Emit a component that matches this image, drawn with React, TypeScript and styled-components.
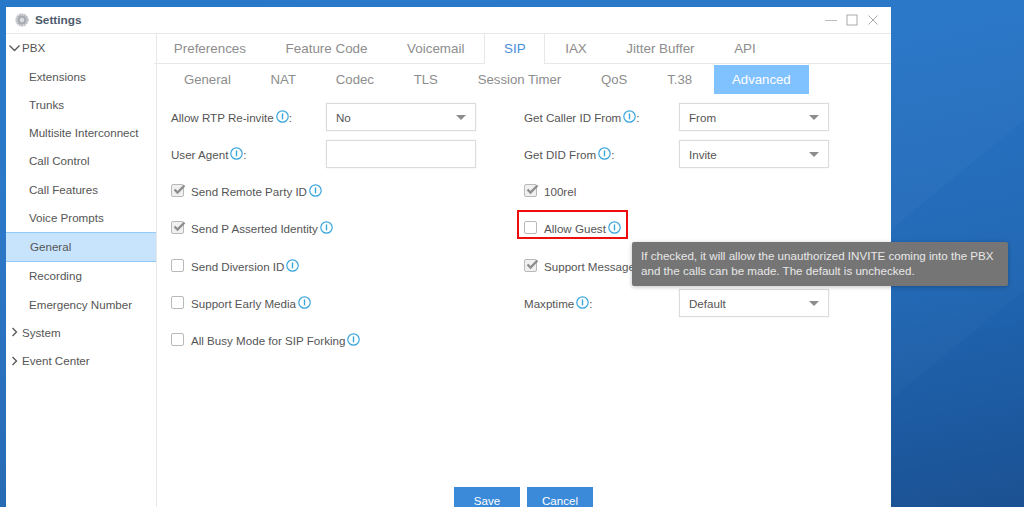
import React from 'react'
import styled, { createGlobalStyle } from 'styled-components'

const GlobalStyle = createGlobalStyle`
  html, body {
    margin: 0;
    height: 100%;
    overflow: hidden;
  }
  body {
    font-family: "Liberation Sans", Arial, sans-serif;
  }
`

const Desktop = styled.div`
  width: 1024px;
  height: 507px;
  overflow: hidden;
  padding: 7px 0 0 6px;
  box-sizing: border-box;
  background:
    linear-gradient(140.6deg, rgba(255, 255, 255, 0.025) 0 71.3%, transparent 71.3%),
    linear-gradient(140.6deg, rgba(255, 255, 255, 0.02) 0 83.9%, transparent 83.9%),
    linear-gradient(168deg, #1e72c7 0%, #2372c6 30%, #1f65b2 68%, #1b5192 100%);
`

const Window = styled.div`
  width: 885px;
  height: 520px;
  background: #fff;
  display: flex;
  flex-direction: column;
`

const TitleBar = styled.div`
  height: 27px;
  flex: none;
  display: flex;
  align-items: center;
  padding: 0 12px 0 9px;
  border-bottom: 1px solid #e8e8e8;
  box-sizing: border-box;
`

const Title = styled.span`
  margin-left: 6px;
  font-size: 11.8px;
  font-weight: bold;
  color: #4d5b6c;
  flex: 1;
`

const WindowControls = styled.div`
  display: flex;
  align-items: center;
  gap: 9px;
`

const Body = styled.div`
  flex: 1;
  display: flex;
  min-height: 0;
`

const Sidebar = styled.nav`
  width: 150px;
  flex: none;
  border-right: 1px solid #e8e8e8;
`

const TreeList = styled.div`
  margin-top: -0.4px;
`

const TreeRow = styled.div<{ $child?: boolean; $active?: boolean }>`
  height: ${p => (p.$active ? 30 : 28.3)}px;
  box-sizing: border-box;
  display: flex;
  align-items: center;
  font-size: 11.6px;
  color: #555;
  padding-left: ${p => (p.$child ? (p.$active ? 24 : 23) : 2)}px;
  background: ${p => (p.$active ? '#c8e4fd' : 'transparent')};
  border-style: solid;
  border-color: #91c9f7;
  border-width: ${p => (p.$active ? '1px 0' : '0')};
`

const TreeLabel = styled.span`
  margin-left: 1px;
`

const Main = styled.div`
  flex: 1;
  min-width: 0;
  position: relative;
`

const TabStrip = styled.div`
  height: 30px;
  box-sizing: border-box;
  display: flex;
  margin-left: -3px;
  border-bottom: 1px solid #e8e8e8;
`

const Tab = styled.div<{ $active?: boolean }>`
  height: 30px;
  padding: 0 18.8px 2px;
  box-sizing: border-box;
  display: flex;
  align-items: center;
  font-size: 13.4px;
  color: ${p => (p.$active ? '#4a90d9' : '#8d8d8d')};
  background: ${p => (p.$active ? '#fff' : 'transparent')};
  border: 1px solid ${p => (p.$active ? '#e8e8e8' : 'transparent')};
  border-top: 0;
  border-bottom: 0;
`

const SubTabStrip = styled.div`
  height: 29px;
  margin-top: 1px;
  display: flex;
  padding-left: 7px;
`

const SubTab = styled.div<{ $active?: boolean }>`
  padding: 0 ${p => (p.$active ? 18 : 19.9)}px;
  margin-left: ${p => (p.$active ? 2 : 0)}px;
  display: flex;
  align-items: center;
  font-size: 13.2px;
  color: ${p => (p.$active ? '#fff' : '#8d8d8d')};
  background: ${p => (p.$active ? '#80c1ff' : 'transparent')};
`

const FormGrid = styled.div`
  height: 393px;
  box-sizing: border-box;
  display: grid;
  grid-template-columns: 353px 353px;
  grid-auto-rows: 37.25px;
  padding: 4.5px 0 0 14px;
`

const Field = styled.div`
  display: flex;
  align-items: center;
  font-size: 11.6px;
  color: #555;
`

const FieldLabel = styled.div`
  width: 155px;
  flex: none;
  display: flex;
  align-items: center;
`

const Select = styled.div`
  width: 150px;
  height: 28px;
  box-sizing: border-box;
  border: 1px solid #dcdcdc;
  box-shadow: 0 0 1px #ddd;
  display: flex;
  align-items: center;
  justify-content: space-between;
  padding: 0 9px;
  font-size: 11.6px;
  color: #555;
`

const Caret = styled.span`
  width: 0;
  height: 0;
  border-left: 5px solid transparent;
  border-right: 5px solid transparent;
  border-top: 5px solid #8c8c8c;
`

const Box = styled.span<{ $checked?: boolean }>`
  width: 13px;
  height: 13px;
  box-sizing: border-box;
  flex: none;
  border: 1px solid #b9b9b9;
  border-radius: 2px;
  margin-right: 7px;
  position: relative;
  top: -1px;
  background: ${p => (p.$checked ? '#f0f0f0' : '#fff')};
  display: inline-flex;
`

const Check = styled.svg`
  position: absolute;
  left: 0;
  top: -2px;
`

const InfoGlyph = styled.svg`
  flex: none;
  margin: -2px 0 0 2px;
`

const GuestFrame = styled.div`
  display: flex;
  align-items: center;
  outline: 2px solid #ee0e0e;
  box-sizing: border-box;
  height: 25px;
  margin: 0 0 8px -5px;
  padding: 8px 5px 0 5px;
`

const Tooltip = styled.div`
  position: absolute;
  left: 475px;
  top: 208px;
  width: 376px;
  height: 44px;
  box-sizing: border-box;
  padding: 6px 9px;
  background: #757575;
  border-radius: 2px;
  box-shadow: 0 1px 4px rgba(0, 0, 0, 0.25);
  color: #e8e8e8;
  font-size: 11.6px;
  line-height: 15px;
  white-space: nowrap;
`

const Actions = styled.div`
  margin-left: 297px;
  display: flex;
  gap: 7px;
`

const Button = styled.div`
  width: 66px;
  height: 26px;
  background: #3a8ad9;
  color: #fff;
  font-size: 11.6px;
  display: flex;
  align-items: center;
  justify-content: center;
`

const InfoIcon = () => (
  <InfoGlyph width="13" height="13" viewBox="0 0 13 13">
    <circle cx="6.5" cy="6.5" r="5.7" fill="none" stroke="#3aa6dc" strokeWidth="1.2" />
    <rect x="5.8" y="3.4" width="1.4" height="6" fill="#3aa6dc" />
  </InfoGlyph>
)

const Chevron = ({ open }: { open?: boolean }) => (
  <svg width="13" height="10" viewBox="0 0 13 10" style={{ flex: 'none' }}>
    <path
      d={open ? 'M1.5 2.5 L6.5 7.5 L11.5 2.5' : 'M4.5 1 L8.5 5 L4.5 9'}
      fill="none"
      stroke="#555"
      strokeWidth="1.3"
    />
  </svg>
)

const GearLogo = () => (
  <svg width="14" height="14" viewBox="0 0 14 14">
    <circle cx="7" cy="7" r="5.6" fill="none" stroke="#bcbfc3" strokeWidth="2" strokeDasharray="2 .5" />
    <circle cx="7" cy="7" r="4.8" fill="#a9adb3" />
    <circle cx="7" cy="7" r="2.2" fill="#dcdee0" />
  </svg>
)

const Checkbox = ({ checked }: { checked?: boolean }) => (
  <Box $checked={checked}>
    {checked && (
      <Check width="15" height="14" viewBox="0 0 15 14">
        <path d="M2.5 6.5 L5.5 9.5 L12.5 2.5" fill="none" stroke="#8e8e8e" strokeWidth="2.4" />
      </Check>
    )}
  </Box>
)

const treeBefore = ['Extensions', 'Trunks', 'Multisite Interconnect', 'Call Control', 'Call Features', 'Voice Prompts']
const treeAfter = ['Recording', 'Emergency Number']
const tabs = ['Preferences', 'Feature Code', 'Voicemail', 'SIP', 'IAX', 'Jitter Buffer', 'API']
const subTabs = ['General', 'NAT', 'Codec', 'TLS', 'Session Timer', 'QoS', 'T.38', 'Advanced']

const App: React.FC = () => (
  <Desktop>
    <GlobalStyle />
    <Window>
      <TitleBar>
        <GearLogo />
        <Title>Settings</Title>
        <WindowControls>
          <svg width="12" height="12" viewBox="0 0 12 12">
            <path d="M0 6.5H12" stroke="#bbb" />
          </svg>
          <svg width="12" height="12" viewBox="0 0 12 12">
            <rect x="1" y="1" width="10" height="10" fill="none" stroke="#aaa" />
          </svg>
          <svg width="12" height="12" viewBox="0 0 12 12">
            <path d="M1.5 1.5 10.5 10.5M10.5 1.5 1.5 10.5" stroke="#aaa" />
          </svg>
        </WindowControls>
      </TitleBar>
      <Body>
        <Sidebar>
          <TreeList>
            <TreeRow>
              <Chevron open />
              <TreeLabel>PBX</TreeLabel>
            </TreeRow>
            {treeBefore.map(t => (
              <TreeRow $child key={t}>{t}</TreeRow>
            ))}
            <TreeRow $child $active>General</TreeRow>
            {treeAfter.map(t => (
              <TreeRow $child key={t}>{t}</TreeRow>
            ))}
            <TreeRow>
              <Chevron />
              <TreeLabel>System</TreeLabel>
            </TreeRow>
            <TreeRow>
              <Chevron />
              <TreeLabel>Event Center</TreeLabel>
            </TreeRow>
          </TreeList>
        </Sidebar>
        <Main>
          <TabStrip>
            {tabs.map(t => (
              <Tab key={t} $active={t === 'SIP'}>{t}</Tab>
            ))}
          </TabStrip>
          <SubTabStrip>
            {subTabs.map(t => (
              <SubTab key={t} $active={t === 'Advanced'}>{t}</SubTab>
            ))}
          </SubTabStrip>
          <FormGrid>
            <Field>
              <FieldLabel>Allow RTP Re-invite<InfoIcon />:</FieldLabel>
              <Select>No<Caret /></Select>
            </Field>
            <Field>
              <FieldLabel>Get Caller ID From<InfoIcon />:</FieldLabel>
              <Select>From<Caret /></Select>
            </Field>
            <Field>
              <FieldLabel>User Agent<InfoIcon />:</FieldLabel>
              <Select />
            </Field>
            <Field>
              <FieldLabel>Get DID From<InfoIcon />:</FieldLabel>
              <Select>Invite<Caret /></Select>
            </Field>
            <Field><Checkbox checked />Send Remote Party ID<InfoIcon /></Field>
            <Field><Checkbox checked />100rel</Field>
            <Field><Checkbox checked />Send P Asserted Identity<InfoIcon /></Field>
            <Field>
              <GuestFrame><Checkbox />Allow Guest<InfoIcon /></GuestFrame>
            </Field>
            <Field><Checkbox />Send Diversion ID<InfoIcon /></Field>
            <Field><Checkbox checked />Support Message</Field>
            <Field><Checkbox />Support Early Media<InfoIcon /></Field>
            <Field>
              <FieldLabel>Maxptime<InfoIcon />:</FieldLabel>
              <Select>Default<Caret /></Select>
            </Field>
            <Field><Checkbox />All Busy Mode for SIP Forking<InfoIcon /></Field>
          </FormGrid>
          <Actions>
            <Button>Save</Button>
            <Button>Cancel</Button>
          </Actions>
          <Tooltip>
            If checked, it will allow the unauthorized INVITE coming into the PBX
            <br />
            and the calls can be made. The default is unchecked.
          </Tooltip>
        </Main>
      </Body>
    </Window>
  </Desktop>
)

export default App
